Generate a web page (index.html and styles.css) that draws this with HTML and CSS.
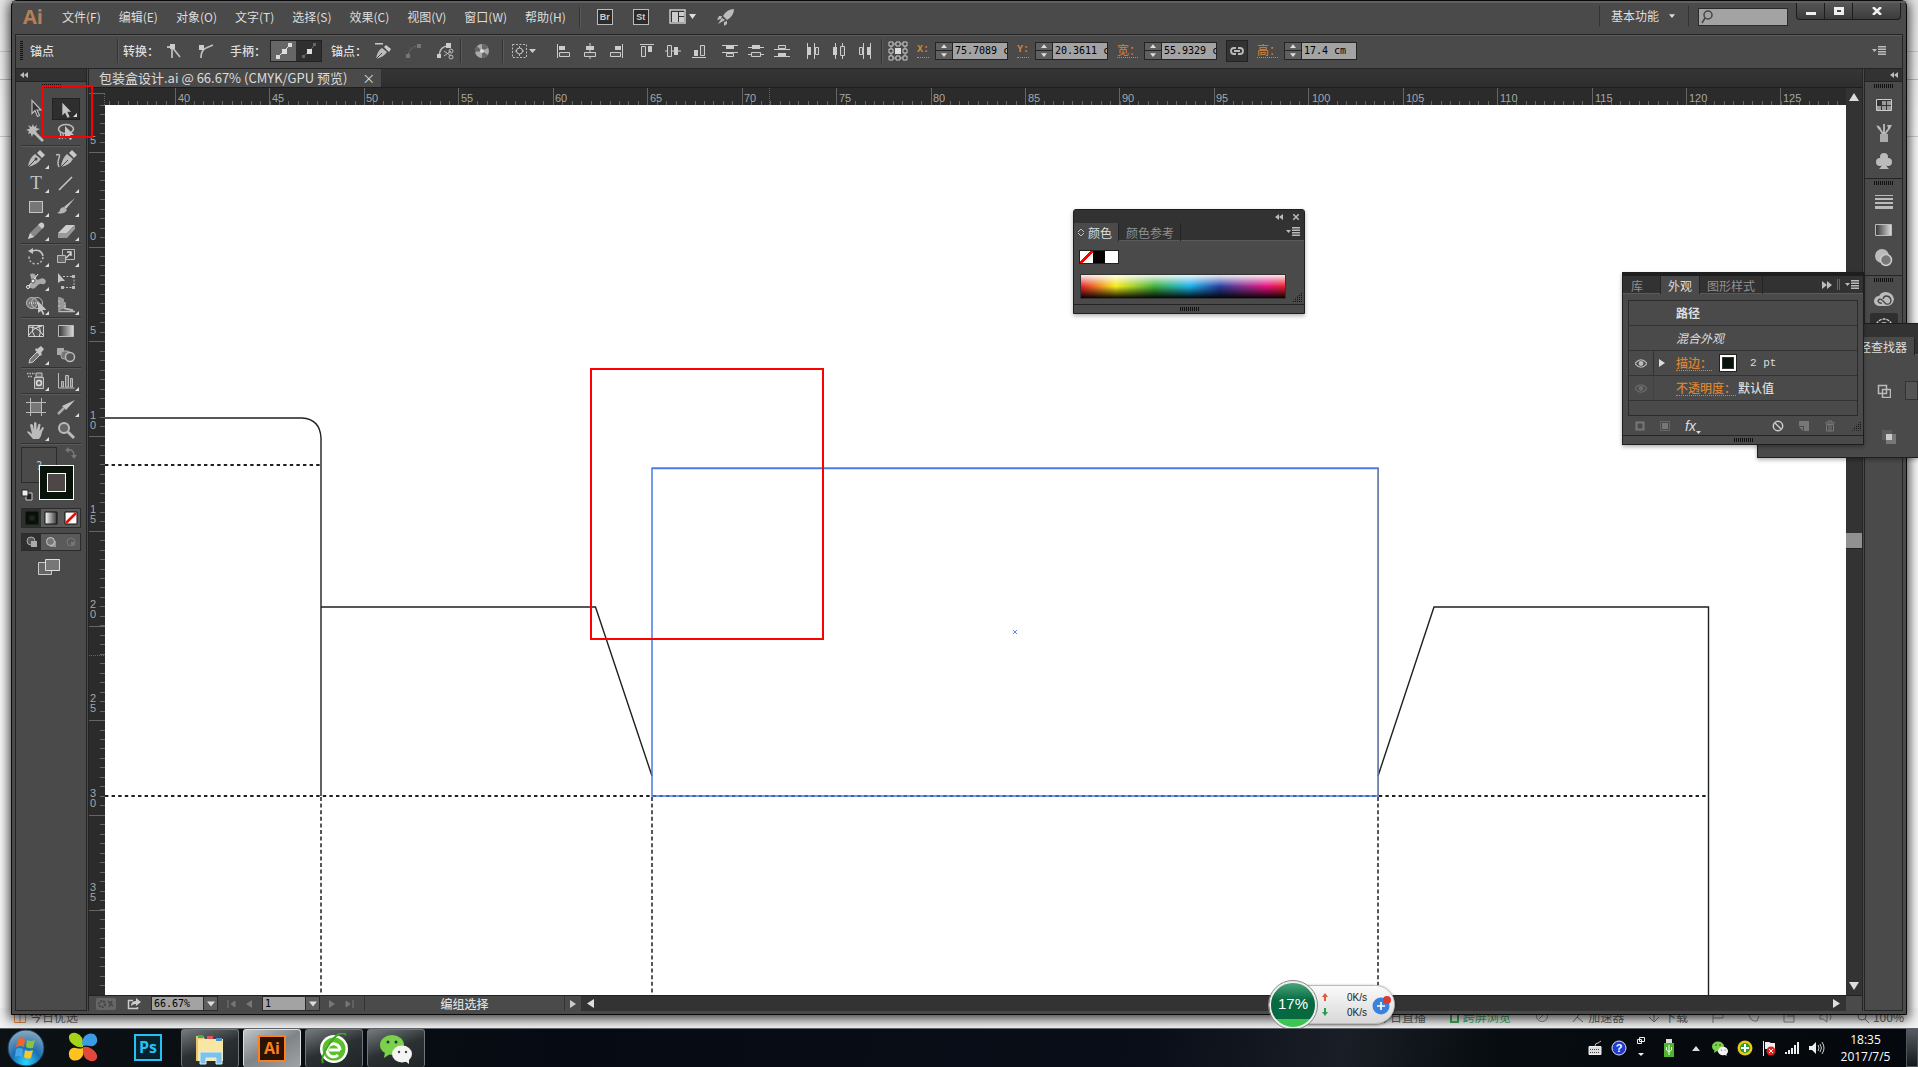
FILE: index.html
```html
<!DOCTYPE html>
<html lang="zh-CN">
<head>
<meta charset="utf-8">
<title>包装盒设计.ai</title>
<link rel="stylesheet" href="styles.css">
</head>
<body>
<svg class="sprite" aria-hidden="true">
  <defs>
    <linearGradient id="fade" x1="0" x2="1"><stop offset="0" stop-color="#333"/><stop offset="1" stop-color="#ddd"/></linearGradient>
    <linearGradient id="fade-light" x1="0" x2="1"><stop offset="0" stop-color="#fff"/><stop offset="1" stop-color="#333"/></linearGradient>
    <radialGradient id="orb" cx=".5" cy=".9" r=".9"><stop offset="0" stop-color="#27d7ff"/><stop offset=".45" stop-color="#1a6fb5"/><stop offset="1" stop-color="#8fa9bd"/></radialGradient>
  </defs>
  <symbol id="collapse" viewBox="0 0 8 6"><path d="M4 0v6L0 3zM8 0v6L4 3z" fill="#bbb"/></symbol>
  <symbol id="expand" viewBox="0 0 10 8"><path d="M0 0v8l5-4zM5 0v8l5-4z" fill="#bbb"/></symbol>
  <symbol id="panel-menu" viewBox="0 0 14 9"><path d="M0 3h5L2.500 6zM6 0h8v1.500H6zM6 2.500h8V4H6zM6 5h8v1.500H6zM6 7.500h8V9H6z" fill="#bbb"/></symbol>
  <symbol id="down" viewBox="0 0 8 5"><path d="M0 0h8L4 5z" fill="#ddd"/></symbol>
  <symbol id="up" viewBox="0 0 8 5"><path d="M0 5h8L4 0z" fill="#ddd"/></symbol>
  <symbol id="t-select" viewBox="0 0 24 24"><path d="M8 3.500v13l3-3 2.500 6 2-1-2.500-5.500h4z" fill="#333" stroke="#bbb" stroke-width="1.200"/></symbol>
  <symbol id="t-direct" viewBox="0 0 24 24"><path d="M8 4v14l3-3 2.500 5.500 2.500-1-2.500-5.500h4z" fill="#c4c4c4"/></symbol>
  <symbol id="t-wand" viewBox="0 0 24 24"><path d="M9 3l1 3 3-2-1 3 4 1-4 2 1 2 7 7-2 2-7-7-2-1-1 3-1.500-4L4 13l1-3-3-1 4-1.500L4 4l3.500 2z" fill="#bbb"/></symbol>
  <symbol id="t-lasso" viewBox="0 0 24 24"><ellipse cx="12" cy="8" rx="7.500" ry="4.500" fill="none" stroke="#bbb" stroke-width="1.600"/><path d="M6 11q2 3-1 7M9 12q1 3-1 6" fill="none" stroke="#bbb" stroke-width="1.300"/><path d="M11 5v13l3-3 2 4 2-1-2-4h4z" fill="#c4c4c4"/></symbol>
  <symbol id="t-pen" viewBox="0 0 24 24"><path d="M4 20q1-9 7-13l6 5q-4 6-13 8z" fill="#bbb"/><path d="M13 6l3-3 5 5-3 3z" fill="#c8c8c8"/><path d="M4 20l7-7" stroke="#444" stroke-width="1"/><circle cx="12" cy="12" r="1.500" fill="#444"/></symbol>
  <symbol id="t-curve" viewBox="0 0 24 24"><path d="M7 20q1-9 6-13l6 5q-3 6-12 8z" fill="#bbb"/><path d="M15 6l3-3 5 5-3 3z" fill="#c8c8c8"/><path d="M7 20l7-7" stroke="#444"/><path d="M2 8q5-2 3 3t0 9" fill="none" stroke="#bbb" stroke-width="1.500"/></symbol>
  <symbol id="t-line" viewBox="0 0 24 24"><path d="M5 19L18 6" stroke="#c4c4c4" stroke-width="1.600"/></symbol>
  <symbol id="t-rect" viewBox="0 0 24 24"><rect x="5.500" y="6.500" width="13" height="11" fill="#777" stroke="#c4c4c4"/></symbol>
  <symbol id="t-brush" viewBox="0 0 24 24"><path d="M21 3l-9 11-2-2z" fill="#c4c4c4"/><path d="M10 12l3 3q-3 5-10 3 3-1 3-3t4-3z" fill="#b4b4b4"/></symbol>
  <symbol id="t-pencil" viewBox="0 0 24 24"><path d="M4 20l2-6 8-8 4 4-8 8z" fill="#888"/><path d="M14 6l2-2q2-1 3.500.500T20 8l-2 2z" fill="#ccc"/><path d="M4 20l2-6 4 4z" fill="#ccc"/></symbol>
  <symbol id="t-eraser" viewBox="0 0 24 24"><path d="M4 14l8-8h9l-8 8z" fill="#ccc"/><path d="M4 14h9v5H4zM13 14l8-8v4l-8 9z" fill="#999"/></symbol>
  <symbol id="t-rotate" viewBox="0 0 24 24"><path d="M8 6q9-3 11 5" fill="none" stroke="#c4c4c4" stroke-width="1.600"/><path d="M19 12q-1 7-8 7-6-1-6-8" fill="none" stroke="#bbb" stroke-width="1.500" stroke-dasharray="2 2"/><path d="M9 3v6L4 6z" fill="#c4c4c4"/></symbol>
  <symbol id="t-scale" viewBox="0 0 24 24"><path d="M8.500 4.500h12v10h-12z" fill="none" stroke="#bbb"/><path d="M3.500 10.500h8v7h-8z" fill="#666" stroke="#bbb"/><path d="M12 13l5-5m-4-1h4v4" fill="none" stroke="#ddd" stroke-width="1.300"/></symbol>
  <symbol id="t-width" viewBox="0 0 24 24"><path d="M6 5q6-2 6 4 0 3 4 1t6 2q-1 4-4 3t-6 3-8-1q5-3 3-8z" fill="#aaa"/><path d="M4 18L14 5" stroke="#eee"/><circle cx="9" cy="12" r="2" fill="#eee" stroke="#555"/><circle cx="4" cy="18" r="1.500" fill="#444" stroke="#eee"/></symbol>
  <symbol id="t-free" viewBox="0 0 24 24"><path d="M9 7.500h11v11H8" fill="none" stroke="#bbb" stroke-dasharray="2 1.500"/><path d="M18 6h3v3h-3zM18 17h3v3h-3zM7 17h3v3H7z" fill="#bbb"/><path d="M4 4v10l3-2h4z" fill="#c4c4c4"/></symbol>
  <symbol id="t-shape" viewBox="0 0 24 24"><circle cx="8" cy="10" r="5.500" fill="#777" stroke="#bbb"/><circle cx="13" cy="10" r="5.500" fill="none" stroke="#bbb"/><path d="M5 10h9" stroke="#eee" stroke-dasharray="1 1"/><path d="M14 8v12l3-2 2 4 1.500-1-2-4h4z" fill="#c4c4c4"/></symbol>
  <symbol id="t-persp" viewBox="0 0 24 24"><path d="M5 4v14.500h16M9 6v9l10 2M4 8l7 2v6l7 1M4 13h8" fill="none" stroke="#bbb" stroke-width="1.300"/><path d="M6 4l4 2v10l-4 1z" fill="#999"/></symbol>
  <symbol id="t-mesh" viewBox="0 0 24 24"><path d="M4.500 6.500h15v11h-15z" fill="#555" stroke="#ccc"/><path d="M5 8q9 0 14 8M5 16q5-8 13-9M9 7q-2 6 2 11M14 7q4 4 1 11" fill="none" stroke="#ddd"/></symbol>
  <symbol id="t-grad" viewBox="0 0 24 24"><path d="M4.500 6.500h15v11h-15z" fill="url(#fade)" stroke="#bbb"/></symbol>
  <symbol id="t-drop" viewBox="0 0 24 24"><path d="M5 20l1-4 7-7 3 3-7 7z" fill="#777" stroke="#ccc"/><path d="M11 7l6 6 1-2-1-1 3-4-3-3-4 3-1-1z" fill="#c4c4c4"/></symbol>
  <symbol id="t-blend" viewBox="0 0 24 24"><path d="M3 5h7v7H3z" fill="#aaa"/><rect x="7" y="8" width="9" height="8" rx="3" fill="#777" stroke="#aaa"/><circle cx="16" cy="14" r="4.500" fill="#555" stroke="#bbb" stroke-width="1.500"/></symbol>
  <symbol id="t-spray" viewBox="0 0 24 24"><path d="M10.500 8.500h9v11h-9zM12 4h6v4h-6z" fill="#666" stroke="#c4c4c4"/><circle cx="15" cy="14" r="2.500" fill="none" stroke="#ddd" stroke-width="1.500"/><path d="M3 4.500h8M4 7.500h5" stroke="#bbb" stroke-width="1.500" stroke-dasharray="1.500 1"/></symbol>
  <symbol id="t-graph" viewBox="0 0 24 24"><path d="M4.500 4v15h16" fill="none" stroke="#bbb"/><path d="M7.500 12.500h2V18h-2zM11.500 6.500h3V18h-3zM16.500 9.500h2V18h-2z" fill="#777" stroke="#bbb"/></symbol>
  <symbol id="t-board" viewBox="0 0 24 24"><path d="M6.500 3v18M17.500 3v18M2 7.500h20M2 17.500h20" stroke="#bbb"/><path d="M7 8h10v9H7z" fill="#777"/></symbol>
  <symbol id="t-slice" viewBox="0 0 24 24"><path d="M21 5L8 11l4 4z" fill="#c4c4c4"/><path d="M10 13L4 19" stroke="#aaa" stroke-width="2.500"/></symbol>
  <symbol id="t-hand" viewBox="0 0 24 24"><path d="M9 20l-6-7q1-2 5 2L6 6q1-2 3 0l1 5V4q1-2 2.500 0v7l2-6q2-1 2 1l-1 6 3-4q2 0 1 2-2 3-2.500 7L15 20z" fill="#bbb"/></symbol>
  <symbol id="t-zoom" viewBox="0 0 24 24"><circle cx="10" cy="9" r="5" fill="#666" stroke="#bbb" stroke-width="2"/><path d="M14 13l6 6" stroke="#bbb" stroke-width="3"/></symbol>
  <symbol id="al-left" viewBox="0 0 18 18"><path d="M2.500 2v14" stroke="#ccc"/><path d="M4 4h6v4H4z" fill="#ccc"/><path d="M4.500 10.500h10v4h-10z" fill="#555" stroke="#ccc"/></symbol>
  <symbol id="al-mid" viewBox="0 0 18 18"><path d="M9 1v16" stroke="#ccc"/><path d="M5 4h8v4H5z" fill="#ccc"/><path d="M3.500 10.500h11v4h-11z" fill="#555" stroke="#ccc"/></symbol>
  <symbol id="ds-v" viewBox="0 0 18 18"><path d="M1 3.500h16M1 10.500h16" stroke="#ccc"/><path d="M5 4h8v3H5z" fill="#ccc"/><path d="M5.500 11.500h7v3h-7z" fill="#555" stroke="#ccc"/></symbol>
  <symbol id="ds-c" viewBox="0 0 18 18"><path d="M1 5.500h16M1 12.500h16" stroke="#ccc"/><path d="M5 3h8v4H5z" fill="#ccc"/><path d="M4.500 10.500h9v4h-9z" fill="#555" stroke="#ccc"/></symbol>
  <symbol id="eye" viewBox="0 0 12 9"><path d="M0 4.500Q6-3 12 4.500 6 12 0 4.500z" fill="none" stroke="#bbb" stroke-width="1.200"/><circle cx="6" cy="4.500" r="2.400" fill="#bbb"/></symbol>
  <symbol id="wechat" viewBox="0 0 32 30"><ellipse cx="12" cy="11" rx="12" ry="10" fill="#7bd149"/><path d="M5 18l-1 6 6-4z" fill="#7bd149"/><ellipse cx="22" cy="20" rx="10" ry="8.500" fill="#f4f4f4"/><path d="M25 27l4 3v-6z" fill="#f4f4f4"/><circle cx="8" cy="8" r="1.500" fill="#234"/><circle cx="16" cy="8" r="1.500" fill="#234"/><circle cx="19" cy="18" r="1.200" fill="#444"/><circle cx="26" cy="18" r="1.200" fill="#444"/></symbol>
</svg>

<div class="desktop">
  <div class="browser-strip" aria-hidden="true">
    <span class="bs-item"><svg width="12" height="12"><path d="M.5 3.500h11v8H.5zM6 3v9" fill="none" stroke="#e08a4a"/></svg>今日优选</span>
    <span class="bs-right">
      <span>今日直播</span>
      <span class="green"><svg width="9" height="12"><path d="M1 1h7v10H1z" fill="none" stroke="#3bb258" stroke-width="2"/></svg>跨屏浏览</span>
      <svg width="14" height="12"><circle cx="7" cy="5" r="5.500" fill="none" stroke="#888"/><path d="M4 8l5-5" stroke="#888"/></svg>
      <span><svg width="12" height="12"><path d="M1 11l4-5 6 5M5 6l5-5" fill="none" stroke="#777"/></svg>加速器</span>
      <span><svg width="12" height="12"><path d="M6 0v11M1 6l5 5 5-5" fill="none" stroke="#777"/></svg>下载</span>
      <svg width="12" height="12"><path d="M1 12V2h10v5H1" fill="none" stroke="#888"/></svg>
      <svg width="12" height="12"><path d="M1 4q2 7 8 6l2-5" fill="none" stroke="#888"/></svg>
      <svg width="12" height="12"><path d="M1 1h10v10H1zM4 5h7" fill="none" stroke="#888"/></svg>
      <svg width="14" height="12"><path d="M1 4h3l4-4v11L4 8H1zM11 3q2 3 0 6" fill="none" stroke="#888"/></svg>
      <span><svg width="12" height="12"><circle cx="5" cy="5" r="4" fill="none" stroke="#777"/><path d="M8 8l4 4" stroke="#777"/></svg>100%</span>
    </span>
  </div>

  <main class="app">
    <header class="menubar">
      <span class="logo">Ai</span>
      <nav class="menus">
        <button>文件(F)</button><button>编辑(E)</button><button>对象(O)</button><button>文字(T)</button><button>选择(S)</button><button>效果(C)</button><button>视图(V)</button><button>窗口(W)</button><button>帮助(H)</button>
      </nav>
      <span class="rule"></span>
      <div class="launch">
        <button class="chip">Br</button>
        <button class="chip">St</button>
        <button aria-label="排列文档"><svg width="28" height="16"><path d="M1 1h15v13H1z" fill="#333" stroke="#ccc" stroke-width="1.500"/><path d="M3 3h6v10H3zM10 3h5v4h-5zM10 8h5v5h-5z" fill="#ccc"/><path d="M20 5h7l-3.500 5z" fill="#ddd"/></svg></button>
        <button aria-label="GPU 性能"><svg width="18" height="18"><path d="M17 1q-7 0-11 7l4 4q7-4 7-11zM5 8H2l-2 4 4-1zM10 13v3l-3 2v-4zM5 10L1 16l7-4z" fill="#bbb"/></svg></button>
      </div>
      <div class="menubar-right">
        <button class="workspace-pick">基本功能 <svg width="6" height="4"><use href="#down"/></svg></button>
        <label class="search"><svg width="12" height="14"><circle cx="7" cy="5" r="4" fill="none" stroke="#444" stroke-width="1.500"/><path d="M4 8l-3 5" stroke="#444" stroke-width="1.500"/></svg><input type="search" aria-label="搜索"></label>
        <div class="win-controls">
          <button aria-label="最小化"><svg width="10" height="10"><path d="M0 6h10v3H0z" fill="#eee"/></svg></button>
          <button aria-label="还原"><svg width="10" height="8"><path d="M1.500 1.500h7v5h-7z" fill="none" stroke="#eee" stroke-width="3"/></svg></button>
          <button class="close" aria-label="关闭"><svg width="10" height="8"><path d="M1 0l8 8M9 0L1 8" stroke="#eee" stroke-width="2.500"/></svg></button>
        </div>
      </div>
    </header>

    <section class="options">
      <span class="grip-v"></span>
      <strong class="opt-title">锚点</strong>
      <span class="rule"></span>
      <div class="opt-group">
        <span class="opt-label">转换：</span>
        <button class="ic" aria-label="尖角"><svg width="18" height="18"><path d="M1 5h5M6 4v12M6 5l8 10" fill="none" stroke="#bbb" stroke-width="1.800"/><path d="M4 2h5v5H4z" fill="#ccc"/></svg></button>
        <button class="ic" aria-label="平滑"><svg width="18" height="18"><path d="M4 16q0-8 5-10l7-3" fill="none" stroke="#bbb" stroke-width="1.800"/><path d="M2 3h5v5H2z" fill="#ccc"/></svg></button>
      </div>
      <div class="opt-group">
        <span class="opt-label">手柄：</span>
        <div class="toggles">
          <button aria-label="显示手柄"><svg width="18" height="16"><path d="M3 14L15 2" stroke="#ddd"/><path d="M7 6h5v5H7zM13 0h4v4h-4zM1 12h4v4H1z" fill="#ddd"/></svg></button>
          <button class="on" aria-label="隐藏手柄"><svg width="18" height="16"><path d="M3 14L15 2" stroke="#666"/><path d="M7 6h5v5H7z" fill="#ddd"/><path d="M13 0h3v3h-3zM2 12h3v3H2z" fill="#666"/></svg></button>
        </div>
      </div>
      <div class="opt-group">
        <span class="opt-label">锚点：</span>
        <button class="ic" aria-label="删除锚点"><svg width="18" height="18"><path d="M1 1h8v1.500H1z" fill="#ccc"/><path d="M2 17q1-8 6-11l5 4q-3 5-11 7z" fill="#bbb"/><path d="M10 5l2-2 5 4-2 3z" fill="#ccc"/><path d="M2 17l6-6" stroke="#444"/></svg></button>
        <button class="ic" aria-label="连接"><svg width="18" height="18"><path d="M3 15q1-10 10-11" fill="none" stroke="#777" stroke-dasharray="2 1"/><path d="M12 2h4v4h-4zM1 12h4v4H1z" fill="#777"/></svg></button>
        <button class="ic" aria-label="剪切路径"><svg width="18" height="18"><path d="M3 14Q4 4 12 4" fill="none" stroke="#bbb" stroke-width="1.500"/><path d="M10 1h5v5h-5zM1 12h4v4H1z" fill="#ccc"/><path d="M8 9l7 5M8 14l7-5" stroke="#bbb"/><circle cx="15" cy="9" r="2" fill="none" stroke="#bbb"/><circle cx="15" cy="15" r="2" fill="none" stroke="#bbb"/></svg></button>
      </div>
      <span class="rule"></span>
      <button class="ic wide" aria-label="重新着色"><svg width="16" height="16"><circle cx="8" cy="8" r="7" fill="#aaa"/><path d="M8 8V1a7 7 0 0 1 6 4zM8 8l6 4a7 7 0 0 1-6 3zM8 8l-7 1a7 7 0 0 1 2-6z" fill="#666"/><circle cx="8" cy="8" r="2" fill="#ddd"/></svg></button>
      <span class="rule"></span>
      <button class="ic wide" aria-label="对齐选项"><svg width="26" height="16"><path d="M1.500 1.500h14v13h-14z" fill="none" stroke="#bbb" stroke-dasharray="2 1.500"/><path d="M8.500 3v10M4 8h9" stroke="#bbb"/><circle cx="8.500" cy="8" r="3" fill="#444" stroke="#ccc"/><path d="M18 6h7l-3.500 4z" fill="#ccc"/></svg></button>
      <div class="align">
        <div><button aria-label="左对齐"><svg><use href="#al-left"/></svg></button><button aria-label="水平居中"><svg><use href="#al-mid"/></svg></button><button aria-label="右对齐"><svg class="flip"><use href="#al-left"/></svg></button></div>
        <div><button aria-label="顶对齐"><svg class="turn"><use href="#al-left"/></svg></button><button aria-label="垂直居中"><svg class="turn"><use href="#al-mid"/></svg></button><button aria-label="底对齐"><svg class="turn-back"><use href="#al-left"/></svg></button></div>
        <div><button aria-label="顶分布"><svg><use href="#ds-v"/></svg></button><button aria-label="垂直分布"><svg><use href="#ds-c"/></svg></button><button aria-label="底分布"><svg class="half"><use href="#ds-v"/></svg></button></div>
        <div><button aria-label="左分布"><svg class="turn-back"><use href="#ds-v"/></svg></button><button aria-label="水平分布"><svg class="turn-back"><use href="#ds-c"/></svg></button><button aria-label="右分布"><svg class="turn"><use href="#ds-v"/></svg></button></div>
      </div>
      <span class="rule"></span>
      <div class="fields">
        <button aria-label="参考点"><svg width="20" height="20"><path d="M3 3h14v14H3z" fill="none" stroke="#bbb"/><path d="M1 1h4v4H1zM8 1h4v4H8zM15 1h4v4h-4zM1 8h4v4H1zM15 8h4v4h-4zM1 15h4v4H1zM8 15h4v4H8zM15 15h4v4h-4z" fill="#444" stroke="#ccc"/><path d="M7 7h6v6H7z" fill="#ddd"/></svg></button>
        <div class="field"><label class="link-label latin" for="fx">X:</label><span class="spin"><span class="steps"><button aria-label="增加"><svg><use href="#up"/></svg></button><button aria-label="减少"><svg><use href="#down"/></svg></button></span><input id="fx" value="75.7089 cm"></span></div>
        <div class="field"><label class="link-label latin" for="fy">Y:</label><span class="spin"><span class="steps"><button aria-label="增加"><svg><use href="#up"/></svg></button><button aria-label="减少"><svg><use href="#down"/></svg></button></span><input id="fy" value="20.3611 cm"></span></div>
        <div class="field"><label class="link-label" for="fw">宽：</label><span class="spin"><span class="steps"><button aria-label="增加"><svg><use href="#up"/></svg></button><button aria-label="减少"><svg><use href="#down"/></svg></button></span><input id="fw" value="55.9329 cm"></span></div>
        <button class="chain" aria-label="约束宽高比例"><svg width="14" height="10"><path d="M6 2H4q-3 0-3 3t3 3h2M8 2h2q3 0 3 3t-3 3H8M4 5h6" fill="none" stroke="#bbb" stroke-width="1.800"/></svg></button>
        <div class="field"><label class="link-label" for="fh">高：</label><span class="spin"><span class="steps"><button aria-label="增加"><svg><use href="#up"/></svg></button><button aria-label="减少"><svg><use href="#down"/></svg></button></span><input id="fh" value="17.4 cm"></span></div>
      </div>
      <button class="opt-menu" aria-label="面板菜单"><svg width="14" height="9"><use href="#panel-menu"/></svg></button>
    </section>

    <section class="workspace">
      <aside class="toolbox">
        <div class="dock-head"><svg width="8" height="6"><use href="#collapse"/></svg></div>
        <span class="grip-h"></span>
        <div class="tools">
          <button aria-label="选择"><svg><use href="#t-select"/></svg></button><button class="more picked" aria-label="编组选择"><svg><use href="#t-direct"/></svg></button>
          <button aria-label="魔棒"><svg><use href="#t-wand"/></svg></button><button aria-label="套索"><svg><use href="#t-lasso"/></svg></button>
        </div>
        <div class="tools">
          <button class="more" aria-label="钢笔"><svg><use href="#t-pen"/></svg></button><button aria-label="曲率"><svg><use href="#t-curve"/></svg></button>
          <button class="more type-tool">T</button><button class="more" aria-label="直线段"><svg><use href="#t-line"/></svg></button>
          <button class="more" aria-label="矩形"><svg><use href="#t-rect"/></svg></button><button class="more" aria-label="画笔"><svg><use href="#t-brush"/></svg></button>
          <button class="more" aria-label="铅笔"><svg><use href="#t-pencil"/></svg></button><button class="more" aria-label="橡皮擦"><svg><use href="#t-eraser"/></svg></button>
        </div>
        <div class="tools">
          <button class="more" aria-label="旋转"><svg><use href="#t-rotate"/></svg></button><button class="more" aria-label="比例缩放"><svg><use href="#t-scale"/></svg></button>
          <button class="more" aria-label="宽度"><svg><use href="#t-width"/></svg></button><button aria-label="自由变换"><svg><use href="#t-free"/></svg></button>
          <button class="more" aria-label="形状生成器"><svg><use href="#t-shape"/></svg></button><button class="more" aria-label="透视网格"><svg><use href="#t-persp"/></svg></button>
        </div>
        <div class="tools">
          <button aria-label="网格"><svg><use href="#t-mesh"/></svg></button><button aria-label="渐变"><svg><use href="#t-grad"/></svg></button>
          <button class="more" aria-label="吸管"><svg><use href="#t-drop"/></svg></button><button aria-label="混合"><svg><use href="#t-blend"/></svg></button>
        </div>
        <div class="tools">
          <button class="more" aria-label="符号喷枪"><svg><use href="#t-spray"/></svg></button><button class="more" aria-label="柱形图"><svg><use href="#t-graph"/></svg></button>
        </div>
        <div class="tools">
          <button aria-label="画板"><svg><use href="#t-board"/></svg></button><button class="more" aria-label="切片"><svg><use href="#t-slice"/></svg></button>
          <button class="more" aria-label="抓手"><svg><use href="#t-hand"/></svg></button><button aria-label="缩放"><svg><use href="#t-zoom"/></svg></button>
        </div>
        <div class="paint">
          <button class="fill">?</button>
          <button class="stroke" aria-label="描边"></button>
          <svg class="swap" width="12" height="12"><path d="M3 3q6-1 6 6" fill="none" stroke="#777" stroke-width="1.500"/><path d="M0 3l4-3v6zM6 8h6l-3 4z" fill="#777"/></svg>
          <svg class="reset" width="12" height="12"><path d="M5 4h6v7H5z" fill="#222" stroke="#ccc"/><path d="M1 1h6v6H1z" fill="#eee" stroke="#222"/></svg>
        </div>
        <div class="modes color-modes">
          <button class="on" aria-label="颜色"><svg width="14" height="14"><path d="M2.500 2.500h9v9h-9z" fill="#222" stroke="#061206" stroke-width="4"/></svg></button><button aria-label="渐变"><svg width="14" height="14"><path d="M1 1h12v12H1z" fill="url(#fade-light)" stroke="#111"/></svg></button><button aria-label="无"><svg width="14" height="14"><path d="M1 1h12v12H1z" fill="#fff" stroke="#111"/><path d="M2 12L12 2" stroke="#f00" stroke-width="2.500"/></svg></button>
        </div>
        <div class="modes">
          <button class="on" aria-label="正常绘图"><svg width="12" height="12"><circle cx="5" cy="5" r="4" fill="#555" stroke="#aaa"/><path d="M5 5h6v6H5z" fill="#aaa"/></svg></button><button aria-label="背面绘图"><svg width="12" height="12"><path d="M5 5h6v6H5z" fill="#999"/><circle cx="5.500" cy="5.500" r="4" fill="#777" stroke="#ccc"/></svg></button><button aria-label="内部绘图"><svg width="12" height="12"><circle cx="6" cy="6" r="4" fill="none" stroke="#777"/><path d="M6 6h4v3H6z" fill="#777"/></svg></button>
        </div>
        <button class="screen-mode" aria-label="更改屏幕模式"><svg width="22" height="18"><path d="M.5 4.500h13v12H.5z" fill="#666" stroke="#ccc"/><path d="M7.500 1.500h14v11h-14z" fill="#777" stroke="#ddd"/></svg></button>
      </aside>

      <section class="document">
        <div class="tabs"><div class="tab">包装盒设计.ai @ 66.67% (CMYK/GPU 预览)<button aria-label="关闭">×</button></div></div>
        <div class="view">
          <div class="corner"></div>
          <svg class="ruler-top" shape-rendering="crispEdges">
            <g transform="translate(-105 0)" stroke="#666">
              <line x1="109" y1="15" x2="2400" y2="15" stroke-width="4" stroke-dasharray="1 8.444"/>
              <line x1="175" y1="8" x2="2400" y2="8" stroke-width="18" stroke-dasharray="1 93.440"/>
              <path d="M769.500 0v17" stroke-dasharray="1 1"/>
            </g>
            <g transform="translate(-105 0)" class="ruler-text">
              <text x="178" y="14">40</text><text x="272" y="14">45</text><text x="366" y="14">50</text><text x="461" y="14">55</text><text x="555" y="14">60</text><text x="650" y="14">65</text><text x="744" y="14">70</text><text x="839" y="14">75</text><text x="933" y="14">80</text><text x="1028" y="14">85</text><text x="1122" y="14">90</text><text x="1216" y="14">95</text><text x="1312" y="14">100</text><text x="1406" y="14">105</text><text x="1500" y="14">110</text><text x="1595" y="14">115</text><text x="1689" y="14">120</text><text x="1783" y="14">125</text>
            </g>
          </svg>
          <button class="scroll-up" aria-label="向上滚动"><svg width="10" height="8"><path d="M0 8h10L5 0z" fill="#ddd"/></svg></button>
          <svg class="ruler-left" shape-rendering="crispEdges">
            <g transform="translate(0 -105)" stroke="#666">
              <line x1="13" y1="105" x2="13" y2="1600" stroke-width="5" stroke-dasharray="1 8.470" stroke-dashoffset="0.500"/>
              <line x1="8" y1="152" x2="8" y2="1600" stroke-width="16" stroke-dasharray="1 93.700"/>
              <path d="M0 655.500h16" stroke-dasharray="1 1"/>
            </g>
            <g transform="translate(0 -105)" class="ruler-text">
              <text x="1" y="144">5</text><text x="1" y="240">0</text><text x="1" y="334">5</text>
              <text x="1" y="419">1</text><text x="1" y="429">0</text><text x="1" y="513">1</text><text x="1" y="523">5</text>
              <text x="1" y="608">2</text><text x="1" y="618">0</text><text x="1" y="702">2</text><text x="1" y="712">5</text>
              <text x="1" y="797">3</text><text x="1" y="807">0</text><text x="1" y="891">3</text><text x="1" y="901">5</text>
            </g>
          </svg>
          <svg class="artboard">
            <g transform="translate(-105 -105)" fill="none" stroke="#1c221c">
              <path d="M105 418h197q18 1 19 20V796M321 607h274.500L652 776M1378 776l56-169h274.500V1000" stroke-width="1.400"/>
              <path d="M105 465h216M105 796h1603" stroke-width="1.800" stroke-dasharray="3.400 3.200"/>
              <path d="M321 797v203M652 797v203M1378 797v203" stroke-width="1.500" stroke-dasharray="4 2.600"/>
              <path d="M652 468.500h726v327.500h-726z" stroke="#4a7ae8" stroke-width="1.500"/>
              <path d="M651.500 467.500h727v329" stroke="#6c7078" stroke-width=".6"/>
              <path d="M1013 630l4 4m0-4l-4 4" stroke="#4a7ae8" stroke-width=".9"/>
            </g>
          </svg>
          <div class="scroll-v"><span class="thumb"></span><svg width="10" height="8"><path d="M0 0h10L5 8z" fill="#ddd"/></svg></div>
        </div>
        <footer class="status">
          <svg width="20" height="12"><rect width="20" height="12" rx="2" fill="#666"/><circle cx="6" cy="6" r="3" fill="none" stroke="#444" stroke-width="2" stroke-dasharray="2 1"/><path d="M12 3l5 5m-4 1l3-6" stroke="#444" stroke-width="1.500"/></svg>
          <button aria-label="导出"><svg width="14" height="12"><path d="M6 2.500H1.500v8h9V9" fill="none" stroke="#ccc" stroke-width="1.500"/><path d="M4 8q0-5 5-5V0l5 4-5 4V6Q6 6 4 8z" fill="#ccc"/></svg></button>
          <span class="combo zoom"><input aria-label="缩放比例" value="66.67%"><button aria-label="选择比例"><svg width="8" height="6"><use href="#down"/></svg></button></span>
          <button class="nav" aria-label="首页"><svg width="9" height="8"><path d="M1 0v8M8 1v6L4 4z" fill="#777" stroke="#777"/></svg></button>
          <button class="nav" aria-label="上一页"><svg width="6" height="8"><path d="M6 0v8L0 4z" fill="#777"/></svg></button>
          <span class="combo page"><input aria-label="画板" value="1"><button aria-label="选择画板"><svg width="8" height="6"><use href="#down"/></svg></button></span>
          <button class="nav" aria-label="下一页"><svg width="6" height="8"><path d="M0 0v8l6-4z" fill="#777"/></svg></button>
          <button class="nav" aria-label="末页"><svg width="9" height="8"><path d="M8 0v8M1 1v6l4-3z" fill="#777" stroke="#777"/></svg></button>
          <span class="current-tool">编组选择</span>
          <svg class="arrow" width="6" height="8"><path d="M0 0v8l6-4z" fill="#ccc"/></svg>
          <div class="scroll-h"><svg width="7" height="9"><path d="M7 0v9L0 4.500z" fill="#ddd"/></svg><svg width="7" height="9"><path d="M0 0v9l7-4.500z" fill="#ddd"/></svg></div>
          <span class="size-corner"></span>
        </footer>
      </section>

      <aside class="dock">
        <div class="dock-head end"><svg width="8" height="6"><use href="#collapse"/></svg></div>
        <div class="dock-group">
          <span class="grip-h"></span>
          <button aria-label="色板"><svg width="16" height="12"><path d="M.5.5h15v11H.5z" fill="#333" stroke="#ccc"/><path d="M6 2h4v4H6zM11 2h4v4h-4zM1 7h4v4H1zM6 7h4v4H6zM11 7h4v4h-4z" fill="#999"/></svg></button>
          <button aria-label="画笔"><svg width="18" height="20"><path d="M5 11h8v8H5z" fill="#aaa"/><path d="M8 11L3 3M9 11V1M10 11l5-7" stroke="#bbb" stroke-width="1.800"/><path d="M1 2l5 3-2 2zM12 2h5l-3 5z" fill="#bbb"/></svg></button>
          <button aria-label="符号"><svg width="18" height="18"><circle cx="9" cy="5" r="4"/><circle cx="5" cy="10" r="4"/><circle cx="13" cy="10" r="4"/><path d="M8 8h2q0 6 4 9H4q4-3 4-9z"/></svg></button>
        </div>
        <div class="dock-group">
          <span class="grip-h"></span>
          <button aria-label="描边"><svg width="18" height="14"><path d="M0 0h18v1H0zM0 3h18v2H0zM0 7h18v2H0zM0 11h18v3H0z"/></svg></button>
          <button aria-label="渐变"><svg width="18" height="13"><path d="M.5.5h16v11H.5z" fill="url(#fade)" stroke="#bbb"/></svg></button>
          <button aria-label="透明度"><svg width="20" height="20"><circle cx="8" cy="8" r="7"/><circle cx="12" cy="12" r="5.500" fill="#777" stroke="#ccc" stroke-width="1.500"/></svg></button>
        </div>
        <div class="dock-group">
          <span class="grip-h"></span>
          <button aria-label="CC 库"><svg width="22" height="16"><path d="M6 15a5 5 0 0 1 0-10Q8 1 13 1q7 1 8 7-1 7-7 7z"/><path d="M9 12q-3 1-4-2 1-3 4-1l4 4q5 1 5-4-1-4-5-4-2 0-3 3" fill="none" stroke="#444" stroke-width="1.300"/></svg></button>
          <button class="picked" aria-label="外观"><svg width="20" height="20"><circle cx="10" cy="10" r="8" fill="none" stroke="#ccc" stroke-width="1.500" stroke-dasharray="3 1"/><circle cx="10" cy="10" r="5"/></svg></button>
        </div>
      </aside>
    </section>
  </main>

  <section class="panel color-panel">
    <div class="panel-head"><svg width="8" height="6"><use href="#collapse"/></svg><svg width="6" height="6"><path d="M0 0l6 6M6 0L0 6" stroke="#bbb" stroke-width="1.500"/></svg></div>
    <div class="panel-tabs"><button class="on"><svg width="6" height="9"><path d="M0 4l3-3 3 3M0 5l3 3 3-3" fill="none" stroke="#bbb"/></svg>颜色</button><button>颜色参考</button><span class="tail"><svg width="14" height="9"><use href="#panel-menu"/></svg></span></div>
    <div class="color-body">
      <div class="swatches"><button class="none" aria-label="无"></button><button class="black" aria-label="黑"></button><button class="white" aria-label="白"></button></div>
      <div class="spectrum"></div>
      <span class="dots"></span>
    </div>
    <div class="panel-foot"><span class="grip-h"></span></div>
  </section>

  <section class="panel path-panel">
    <div class="panel-head"></div>
    <div class="panel-tabs"><button class="on">路径查找器</button></div>
    <div class="path-body">
      <svg width="14" height="14"><path d="M1.500 1.500h8v8h-8zM5.500 5.500h8v8h-8z" fill="none" stroke="#bbb" stroke-width="1.500"/></svg><button aria-label="扩展"></button>
      <svg width="14" height="14"><path d="M0 0h10v10H0z" fill="#5c5c5c"/><path d="M4 4h10v10H4z" fill="#777"/><path d="M4 4h6v6H4z" fill="#ccc"/></svg>
    </div>
  </section>

  <section class="panel look-panel">
    <div class="panel-tabs"><button>库</button><button class="on">外观</button><button>图形样式</button><span class="tail"><svg width="10" height="8"><use href="#expand"/></svg><i></i><svg width="14" height="9"><use href="#panel-menu"/></svg></span></div>
    <div class="look-list">
      <div class="look-row"><span class="eye"></span><b>路径</b></div>
      <div class="look-row"><span class="eye"></span><em>混合外观</em></div>
      <div class="look-row split"><span class="eye"><svg width="12" height="9"><use href="#eye"/></svg></span><svg class="tri" width="6" height="8"><path d="M0 0v8l6-4z" fill="#ddd"/></svg><a href="#">描边：</a><span class="ink"></span><span class="pt">2 pt</span></div>
      <div class="look-row split"><span class="eye dim"><svg width="12" height="9"><use href="#eye"/></svg></span><a href="#">不透明度：</a><b>默认值</b></div>
      <div class="look-row last"></div>
    </div>
    <div class="look-tools">
      <svg width="10" height="10"><path d="M1.500 1.500h7v7h-7z" fill="none" stroke="#777" stroke-width="2"/></svg>
      <svg width="10" height="10"><path d="M.5.5h9v9h-9z" fill="none" stroke="#666"/><path d="M2 2h6v6H2z" fill="#777"/></svg>
      <button class="fx">fx<svg width="5" height="3"><use href="#down"/></svg></button>
      <svg class="push" width="12" height="12"><circle cx="6" cy="6" r="4.700" fill="none" stroke="#ccc" stroke-width="1.500"/><path d="M3 3l6 6" stroke="#ccc" stroke-width="1.500"/></svg>
      <svg width="10" height="10"><path d="M0 0h10v10H5V5H0z" fill="#777"/><path d="M0 6h4v4z" fill="#777"/></svg>
      <svg width="12" height="12"><path d="M1 3h10M4 3V1h4v2M2.500 4.500h7V11h-7zM5 5v6M7 5v6" fill="none" stroke="#777"/></svg>
      <span class="dots"></span>
    </div>
    <div class="panel-foot"><span class="grip-h"></span></div>
  </section>

  <div class="mark mark-tool"></div>
  <div class="mark mark-art"></div>

  <div class="gadget">
    <div class="ball">17%</div>
    <div class="rates"><span><svg width="6" height="8"><path d="M3 0l3 4H4v4H2V4H0z" fill="#e05a3c"/></svg>0K/s</span><span><svg width="6" height="8"><path d="M3 8l3-4H4V0H2v4H0z" fill="#2a9c50"/></svg>0K/s</span></div>
    <svg width="20" height="20"><circle cx="9" cy="11" r="8.500" fill="#3b82dc"/><path d="M9 7v8M5 11h8" stroke="#fff" stroke-width="1.600"/><circle cx="15" cy="5" r="4" fill="#dd3a36"/></svg>
  </div>
</div>

<footer class="taskbar">
  <button class="start" aria-label="开始"><svg width="38" height="38" viewBox="0 0 38 38"><circle cx="19" cy="19" r="18" fill="url(#orb)" stroke="#1c3c55"/><path d="M11 10q4-2 7 0l-1 8q-4-2-8 0z" fill="#f0662a"/><path d="M20 11q4 2 8 0l-2 8q-4 1-7-1z" fill="#8ac43a"/><path d="M9 20q4-2 7 0l-1 8q-3-2-7 0z" fill="#45a5e8"/><path d="M18 21q4 2 8 0l-2 8q-4 2-7-1z" fill="#fbc52c"/></svg></button>
  <button class="pin" aria-label="相册"><svg width="30" height="30"><path d="M15 15q-5 1-9-2Q0 9 1 4q2-4 7-3 8 2 7 14z" fill="#a5d318"/><path d="M15 14q-2-4 1-9 4-5 10-3 4 3 3 8-2 5-7 4-4-1-7 0z" fill="#3a9be8"/><path d="M15 16q2 4-1 9-4 5-10 3-4-3-3-8 2-5 7-4 4 1 7 0z" fill="#ffc21e"/><path d="M15 15q5-1 9 2 6 4 5 9-2 4-7 3-8-2-7-14z" fill="#e0483c"/></svg></button>
  <button class="pin"><span class="tile ps">Ps</span></button>
  <button class="task" aria-label="资源管理器"><svg width="34" height="32"><path d="M3 3h7l2 3h18v22H3z" fill="#e8c66a"/><path d="M5 6h25v22H5z" fill="#f8e7a2"/><path d="M5 2h5v3H5z" fill="#3fae5a"/><path d="M14 3h6v3h-6z" fill="#d55"/><path d="M23 5h6v3h-6z" fill="#4a90d9"/><path d="M7 31V19h22v12h-6v-6H13v6z" fill="#7cc2ea" stroke="#d5effc"/></svg></button>
  <button class="task active"><span class="tile ai">Ai</span></button>
  <button class="task" aria-label="浏览器"><svg width="32" height="32"><circle cx="16" cy="16" r="14" fill="#fff"/><circle cx="16" cy="16" r="11.500" fill="#5bbf2a"/><path d="M22 17H11M22 17a6.500 6.500 0 1 0-2 5" fill="none" stroke="#fff" stroke-width="3"/><path d="M5 30Q2 24 12 10T28 2" fill="none" stroke="#3fa51e" stroke-width="2"/></svg></button>
  <button class="task" aria-label="微信"><svg width="32" height="30"><use href="#wechat"/></svg></button>
  <div class="tray">
    <svg width="14" height="16"><path d="M1 6.500h12v8H1z" fill="#ddd" stroke="#eee"/><path d="M2 9.500h10M2 12.500h10" stroke="#444" stroke-dasharray="1 1"/><path d="M7 6q0-3 3-3l3-2" fill="none" stroke="#bbb"/></svg>
    <svg width="16" height="16"><circle cx="8" cy="8" r="7" fill="#1f3bd0" stroke="#dde"/><text x="8" y="12" text-anchor="middle" class="help">?</text></svg>
    <svg width="10" height="24"><path d="M3.500 1.500h5v4h-5zM1.500 3.500h4v4h-4z" fill="#111" stroke="#eee"/><path d="M2 17h6l-3 3z" fill="#eee"/></svg>
    <svg class="gap" width="10" height="18"><path d="M2 0h6v4H2z" fill="#ddd"/><path d="M0 4h10v14H0z" fill="#4fb52c"/><path d="M5 6v10M2.500 8v3L5 13l2.500-2V8" fill="none" stroke="#fff"/></svg>
    <svg class="gap expand-tray" width="8" height="5"><use href="#up"/></svg>
    <svg width="16" height="15"><use href="#wechat"/></svg>
    <svg width="16" height="16"><circle cx="8" cy="8" r="7.500" fill="#e8c818"/><circle cx="8" cy="8" r="5" fill="#2f9a30"/><path d="M8 4v8M4 8h8" stroke="#fff" stroke-width="2"/></svg>
    <svg width="14" height="16"><path d="M1.500 1v15" stroke="#eee"/><path d="M3 2h4l2 1h4v6H3z" fill="#eee"/><circle cx="9" cy="11" r="4.500" fill="#d22"/><path d="M7 9l4 4M11 9l-4 4" stroke="#fff"/></svg>
    <svg width="15" height="14"><path d="M0 11h2v2H0zM3 9h2v4H3zM6 7h2v6H6zM9 4h2v9H9zM12 1h2v12h-2z" fill="#eee"/></svg>
    <svg width="16" height="14"><path d="M0 5h3l4-4v12L3 9H0z" fill="#eee"/><path d="M9 4q2 3 0 6M11 3q3 4 0 8M13 1q4 6 0 12" fill="none" stroke="#ccc"/></svg>
  </div>
  <time class="clock"><span>18:35</span><span>2017/7/5</span></time>
  <button class="show-desktop" aria-label="显示桌面"></button>
</footer>
</body>
</html>
```
FILE: styles.css
```css
:root {
  --panel: #4a4a4a;
  --edge: #242424;
  --dark: #323232;
  --field: #a3a3a3;
  --orange: #d98432;
  --mono: "DejaVu Sans Mono", monospace;
}

* { box-sizing: border-box; }

body {
  margin: 0;
  height: 100vh;
  display: flex;
  flex-direction: column;
  overflow: hidden;
  background: #f7f7f7;
  color: #ddd;
  font: 12px/16px "Noto Sans CJK SC", sans-serif;
}

button, input {
  font: inherit;
  color: inherit;
  border: 0;
  padding: 0;
  margin: 0;
  background: none;
  border-radius: 0;
  min-width: 0;
}

svg { display: block; flex: none; }
.sprite { position: absolute; width: 0; height: 0; }

/* desktop and the browser window behind */
.desktop {
  position: relative;
  flex: 1;
  min-height: 0;
  display: flex;
  background:
    linear-gradient(transparent 51px, #ccc 51px 52px, transparent 52px 79px, #bbb 79px 80px, transparent 80px 136px, #ccc 136px 137px, transparent 137px),
    linear-gradient(#e4e4e4, #f9f9f9 140px);
  padding: 0 11px 13px;
}

.browser-strip {
  position: absolute;
  left: 0;
  right: 0;
  bottom: 0;
  height: 20px;
  padding: 0 14px;
  display: flex;
  justify-content: space-between;
  background: #f2f2f2;
  color: #666;
}
.browser-strip span { display: flex; align-items: center; gap: 4px; height: 18px; }
.bs-right { width: 526px; justify-content: space-between; }
.browser-strip .bs-right { gap: 8px; }
.browser-strip .green { color: #3bb258; }

/* application window */
.app {
  position: relative;
  flex: 1;
  min-width: 0;
  display: flex;
  flex-direction: column;
  background: var(--panel);
  border: 1px solid #0a0a0a;
  border-radius: 6px 6px 0 0;
  padding: 0 3px 3px;
  box-shadow: 0 2px 12px 2px rgba(0, 0, 0, .75);
}

.menubar {
  height: 33px;
  flex: none;
  display: flex;
  align-items: center;
  border-top: 2px solid #606060;
  margin: 0 -3px;
  padding: 0 0 4px 11px;
}
.logo { color: #b57f59; font: bold 20px/24px "Open Sans", sans-serif; width: 39px; }
.menus { display: flex; gap: 18px; }
.rule { width: 2px; height: 24px; background: #333; border-right: 1px solid #5a5a5a; flex: none; }
.menubar > .rule { margin: 0 16px 0 13px; height: 20px; }
.launch { display: flex; align-items: center; gap: 20px; }
.chip { width: 16px; height: 16px; border: 1px solid #bbb; background: #2b2b2b; color: #ccc; font: bold 9px/14px "Liberation Sans", sans-serif; }
.menubar-right { margin-left: auto; display: flex; align-self: flex-start; }
.workspace-pick {
  display: flex; align-items: center; gap: 10px;
  height: 20px; margin-top: 3px; padding: 0 13px 0 11px;
  border: solid #333; border-width: 0 1px;
}
.search { display: flex; align-items: center; width: 90px; height: 18px; margin: 5px 8px 0 9px; background: var(--field); border: 1px solid #2b2b2b; padding-left: 2px; }
.search input { width: 70px; outline: 0; }
.win-controls { display: flex; margin-right: 5px; height: 17px; border: 1px solid #1c1c1c; border-top: 0; border-radius: 0 0 4px 4px; background: linear-gradient(#555, #3c3c3c); }
.win-controls button { width: 28px; display: grid; place-items: center; border-right: 1px solid #1c1c1c; }
.win-controls .close { width: 47px; border: 0; }

.options {
  height: 35px;
  flex: none;
  display: flex;
  align-items: center;
  border: 1px solid var(--edge);
  box-shadow: inset 0 1px #5c5c5c;
  padding: 0 0 2px 4px;
}
.grip-v { width: 3px; height: 20px; background: repeating-linear-gradient(#111 0 1px, #4a4a4a 1px 2px); }
.opt-title { width: 94px; padding-left: 7px; font-weight: 500; }
.opt-group { display: flex; align-items: center; margin-left: 4px; }
.opt-group + .opt-group { margin-left: 9px; }
.opt-label { font-weight: 500; width: 36px; }
.ic { width: 31px; height: 24px; display: grid; place-items: center; }
.ic.wide { width: 40px; }
.toggles { display: flex; margin-left: 4px; border: 1px solid #222; height: 22px; }
.toggles button { width: 25px; display: grid; place-items: center; background: #666; }
.toggles .on { background: #2f2f2f; }
.align { display: flex; gap: 5px; margin: 0 3px 0 7px; }
.align > div { display: flex; }
.align button { width: 26px; height: 24px; display: grid; place-items: center; }
.align svg { width: 18px; height: 18px; }
.flip { transform: scaleX(-1); }
.turn { transform: rotate(90deg); }
.turn-back { transform: rotate(-90deg); }
.half { transform: rotate(180deg); }
.fields { display: flex; align-items: center; gap: 9px; margin-left: 5px; }
.field { display: flex; align-items: center; gap: 6px; }
.link-label { width: 21px; height: 15px; line-height: 14px; overflow: hidden; white-space: nowrap; color: var(--orange); border-bottom: 1px dotted var(--orange); }
.link-label.latin { width: 12px; font-family: "Liberation Mono", monospace; font-size: 10px; font-weight: bold; }
.spin { display: flex; width: 73px; height: 18px; border: 1px solid var(--edge); }
.steps { width: 17px; display: grid; background: #5f5f5f; border-right: 1px solid var(--edge); }
.steps button { display: grid; place-items: center; }
.steps button + button { border-top: 1px solid var(--edge); }
.steps svg { width: 6px; height: 4px; }
.spin input { flex: 1; padding-left: 2px; background: var(--field); color: #000; font: 10px/16px var(--mono); }
.chain { width: 22px; height: 22px; display: grid; place-items: center; background: #333; border: 1px solid #222; }
.opt-menu { margin: 0 16px 0 auto; }

/* workspace */
.workspace { flex: 1; min-height: 0; display: flex; }

.dock-head { height: 13px; flex: none; display: flex; align-items: center; padding: 0 4px; background: var(--dark); border-bottom: 1px solid var(--edge); align-self: stretch; }
.dock-head.end { justify-content: flex-end; }
.grip-h { display: block; width: 19px; height: 4px; flex: none; background: repeating-linear-gradient(90deg, #111 0 1px, #4a4a4a 1px 2px); }

.toolbox {
  width: 72px;
  flex: none;
  display: flex;
  flex-direction: column;
  align-items: center;
  border: 1px solid var(--edge);
  border-top: 0;
}
.toolbox > .grip-h { margin: 2px 0 9px; }
.tools { display: grid; grid-template-columns: 30px 30px; grid-auto-rows: 24px; border-bottom: 1px solid #333; box-shadow: 0 1px #5a5a5a; margin-bottom: 1px; }
.tools button { position: relative; display: grid; place-items: center; color: #c4c4c4; }
.tools svg { width: 24px; height: 24px; }
.tools .type-tool { font: 19px/22px "Liberation Serif", serif; }
.tools .picked { background: #2e2e2e; margin: 1px; border: 1px solid #222; }
.tools .picked svg { height: 22px; }
.more::after { content: ""; position: absolute; right: 2px; bottom: 2px; border: solid transparent; border-width: 0 0 4px 4px; border-bottom-color: #ddd; }
.paint { position: relative; width: 60px; height: 56px; margin-top: 2px; }
.fill { position: absolute; left: 0; top: 0; width: 36px; height: 36px; border: 1px solid #2b2b2b; color: #a8cbe4; font-size: 12px; line-height: 34px; }
.stroke { position: absolute; left: 18px; top: 18px; width: 35px; height: 35px; background: #4d4747; border: 1px solid #fff; box-shadow: inset 0 0 0 7px #08140a, inset 0 0 0 8px #fff; }
.swap { position: absolute; right: 4px; top: 0; }
.reset { position: absolute; left: 0; bottom: 2px; }
.modes { display: grid; grid-template-columns: 19px 20px 19px; width: 60px; height: 18px; border: 1px solid #2b2b2b; background: #5a5a5a; margin-top: 5px; }
.color-modes { height: 20px; margin-top: 5px; }
.modes button { display: grid; place-items: center; }
.modes .on { background: #2f2f2f; }
.screen-mode { margin: 7px 0 0 -4px; }

.document { flex: 1; min-width: 0; margin: 0 1px; display: flex; flex-direction: column; border: solid var(--edge); border-width: 0 1px; }
.tabs { height: 19px; flex: none; display: flex; background: linear-gradient(#353535, #2e2e2e); border-bottom: 1px solid #1e1e1e; }
.tab { display: flex; align-items: center; gap: 15px; padding: 0 6px 0 10px; background: var(--panel); font-size: 13px; line-height: 18px; white-space: nowrap; }
.view { flex: 1; min-height: 0; display: grid; grid-template: 17px minmax(0, 1fr) / 16px minmax(0, 1fr) 16px; background: #2b2b2b; }
.corner { border-right: 1px dotted #666; border-top: 1px solid #666; margin-top: 5px; }
.ruler-top, .ruler-left, .artboard { width: 100%; height: 100%; overflow: hidden; }
.ruler-text { fill: #a6a6a6; font: 11px "Liberation Sans", sans-serif; }
.artboard { background: #fff; }
.scroll-up, .scroll-v { background: #333; display: grid; place-items: center; }
.scroll-v { grid-template-rows: minmax(0, 1fr) 18px; justify-items: stretch; }
.scroll-v svg { justify-self: center; }
.thumb { height: 16px; background: #919191; border-bottom: 1px solid #222; }

.status { height: 16px; flex: none; display: flex; align-items: center; padding-left: 7px; border-top: 1px solid #222; }
.status > button:first-of-type { margin: 0 10px 0 11px; }
.combo { display: flex; height: 15px; background: var(--field); border: 1px solid #2b2b2b; }
.combo input { flex: 1; padding-left: 2px; color: #000; font: 10px/13px var(--mono); }
.combo button { width: 14px; display: grid; place-items: center; background: #5f5f5f; border-left: 1px solid #2b2b2b; }
.zoom { width: 67px; margin-right: 9px; }
.page { width: 58px; }
.nav { margin-right: 10px; }
.page + .nav { margin-left: 9px; }
.current-tool { width: 201px; text-align: center; font-weight: 500; border-left: 1px solid #333; border-right: 1px solid #333; line-height: 15px; }
.arrow { margin: 0 5px; }
.scroll-h { flex: 1; height: 15px; display: flex; align-items: center; justify-content: space-between; padding: 0 6px; background: #333; }
.size-corner { width: 16px; background: var(--panel); }

.dock { width: 39px; flex: none; border: solid var(--edge); border-width: 0 1px 1px; display: flex; flex-direction: column; }
.dock-group { display: flex; flex-direction: column; align-items: center; padding: 2px 0 3px; border-bottom: 1px solid var(--edge); }
.dock-group:last-child { border: 0; }
.dock-group .grip-h { margin-bottom: 3px; }
.dock-group button { width: 28px; height: 28px; display: grid; place-items: center; fill: #bbb; }
.dock .picked { background: #2f2f2f; border-radius: 2px; }

/* floating panels */
.panel { position: absolute; background: var(--panel); border: 1px solid #1e1e1e; box-shadow: 0 2px 4px rgba(0, 0, 0, .3); }
.panel-head { height: 13px; display: flex; align-items: center; justify-content: flex-end; gap: 10px; padding: 0 5px; background: var(--dark); }
.panel-tabs { height: 18px; display: flex; background: var(--dark); border-bottom: 1px solid #5a5a5a; color: #909090; }
.panel-tabs button { display: flex; align-items: center; gap: 4px; height: 18px; padding: 0 7px; border-right: 1px solid var(--edge); line-height: 17px; white-space: nowrap; }
.panel-tabs .on { background: var(--panel); color: #ddd; }
.tail { margin-left: auto; display: flex; align-items: center; gap: 5px; padding-right: 4px; }
.tail i { width: 3px; height: 11px; border: solid #666; border-width: 0 1px; }
.panel-foot { height: 9px; display: grid; place-items: center; border-top: 1px solid var(--edge); }
.dots {
  width: 10px; height: 10px;
  background:
    repeating-linear-gradient(var(--panel) 0 1px, transparent 1px 2px),
    repeating-linear-gradient(90deg, var(--panel) 0 1px, #111 1px 2px);
  clip-path: polygon(100% 0, 100% 100%, 0 100%);
}

.color-panel { left: 1073px; top: 209px; width: 232px; border-radius: 3px 3px 0 0; }
.color-panel .panel-tabs button { padding: 0 6px 0 4px; }
.color-panel .panel-tabs button + button { padding-left: 7px; }
.color-body { position: relative; height: 63px; padding: 9px 18px 0 5px; }
.color-body .dots { position: absolute; right: 2px; bottom: 2px; }
.swatches { display: flex; width: 40px; height: 14px; border: 1px solid #222; }
.swatches button { flex: 1; background: #fff; }
.swatches .none { background: linear-gradient(135deg, #fff 43%, #f00 43% 57%, #fff 57%); }
.swatches .black { background: #080303; }
.spectrum {
  height: 25px; margin: 10px 0 0 1px; border: 1px solid #333;
  background:
    linear-gradient(rgba(255, 255, 255, .9), transparent 50%, rgba(0, 0, 0, .95)),
    linear-gradient(90deg, #e3202a, #f5ea1a 17%, #3fae3a 36%, #19b1ea 53%, #263f9e 68%, #8c2f8e 80%, #e5127e 91%, #e3202a);
}

.path-panel { right: 0; top: 323px; width: 161px; height: 135px; border-right: 0; }
.path-panel .panel-tabs { padding-left: 82px; }
.path-body { display: grid; grid-template-columns: 28px 1fr; row-gap: 30px; padding: 26px 0 0 119px; align-items: center; }
.path-body button { height: 19px; border: 1px solid #333; background: #555; }
.path-body svg + button + svg { margin-left: 5px; }

.look-panel { right: 54px; top: 272px; width: 242px; border-top-width: 4px; }
.look-panel .panel-tabs button:first-child { padding: 0 17px 0 8px; }
.look-list { margin: 6px 5px 0; border: 1px solid #2b2b2b; }
.look-row { display: flex; align-items: center; height: 25px; border-bottom: 1px solid #333; }
.look-row.last { height: 14px; border: 0; }
.look-row b { font-weight: 700; color: #ddd; }
.eye { width: 25px; height: 24px; flex: none; display: grid; place-items: center; margin-right: 22px; }
.split .eye { border-right: 1px solid #333; }
.eye.dim { opacity: .3; }
.tri { margin: 0 11px 0 -17px; }
.look-row a { color: var(--orange); text-decoration: none; border-bottom: 1px dotted var(--orange); line-height: 14px; font-weight: 500; }
.split b { margin-left: 2px; font-weight: 500; }
.ink { width: 16px; height: 16px; margin: 0 14px 0 8px; background: #08140a; border: 2px solid #fff; outline: 1px solid #222; box-shadow: inset 0 0 0 1px #333; }
.pt { font: 11px/16px "Liberation Mono", monospace; }
.look-tools { display: flex; align-items: center; gap: 15px; height: 19px; padding: 0 2px 0 12px; }
.look-tools .push { margin-left: auto; }
.fx { display: flex; align-items: end; font: italic 14px/16px "Liberation Sans", sans-serif; }

/* annotations */
.mark { position: absolute; border: 2px solid #f00; pointer-events: none; }
.mark-tool { left: 42px; top: 85px; width: 51px; height: 53px; }
.mark-art { left: 590px; top: 368px; width: 234px; height: 272px; }

/* speed gadget */
.gadget {
  position: absolute; left: 1273px; top: 985px; width: 122px; height: 39px;
  display: flex; align-items: center; gap: 5px;
  border-radius: 20px; background: linear-gradient(#fafafa, #d8d8d8);
  border: 1px solid #bbb;
  box-shadow: 0 1px 3px rgba(0, 0, 0, .5);
}
.ball { width: 48px; height: 48px; margin-left: -5px; border-radius: 50%; border: 2px solid #eee; outline: 1px solid #888; background: linear-gradient(#4aa57c, #06693f 40% 82%, #3cc552 82%); color: #fff; font: 15px/42px "Liberation Sans", sans-serif; text-align: center; }
.rates { display: grid; width: 45px; color: #222; font: 10px/15px "Liberation Sans", sans-serif; }
.rates span { display: flex; align-items: center; justify-content: space-between; }

/* taskbar */
.taskbar {
  height: 39px; flex: none; display: flex; align-items: stretch;
  background: linear-gradient(100deg, #0c1114, #060a12 30%, #0a0e18 60%, #1a1e26 70%, #070c10 78%, #05080c);
  border-top: 1px solid #5c6266;
  z-index: 1;
}
.taskbar button { display: grid; place-items: center; }
.taskbar .start { margin-left: 7px; width: 38px; }
.pin { width: 62px; padding: 0 0 2px; }
.start + .pin { margin-left: 7px; }
.pin + .pin { margin: 0 2px 0 3px; }
.tile { width: 28px; height: 27px; display: block; border: 2px solid; font: bold 16px/22px "Open Sans", sans-serif; text-align: center; }
.ps { color: #25c1f5; background: #06222f; }
.ai { color: #ff7f18; background: #2a1303; }
.task { width: 58px; margin-right: 4px; border: 1px solid #70767a; border-bottom: 0; border-radius: 3px; background: linear-gradient(160deg, #74797c, #2b3033 50%, #202528); }
.task.active { background: linear-gradient(150deg, #c2c4c6, #7f8487 50%, #a0a3a5); border-color: #ddd; }
.tray { margin-left: auto; display: flex; align-items: center; gap: 9px; }
.tray .gap { margin-left: 9px; }
.tray .expand-tray { margin-right: 3px; }
.help { fill: #fff; font: bold 11px "Liberation Sans", sans-serif; }
.clock { width: 81px; display: grid; align-content: center; text-align: center; color: #fff; font: 12px/17px "Open Sans", sans-serif; }
.show-desktop { width: 12px; border: 1px solid #50565a; background: linear-gradient(#555b60, #15191d); }
```
